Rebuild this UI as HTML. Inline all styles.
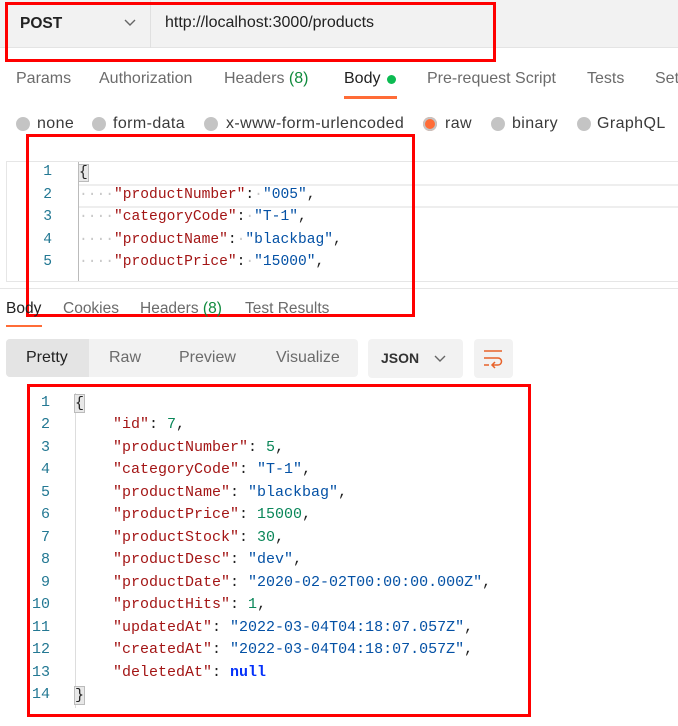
<!DOCTYPE html>
<html><head><meta charset="utf-8"><style>
*{margin:0;padding:0;box-sizing:border-box}
body{width:678px;height:726px;background:#fff;font-family:"Liberation Sans",sans-serif;position:relative;overflow:hidden;color:#212121}
.a{position:absolute;white-space:nowrap}
.mono{font-family:"Liberation Mono",monospace;font-size:14.6px}
.mono2{font-family:"Liberation Mono",monospace;font-size:15px}
.k{color:#a31515}.s{color:#0451a5}.n{color:#098658}.nl{color:#0431fa;font-weight:bold}
.ln{color:#237893;text-align:right;width:30px}
.red{position:absolute;border:3px solid #f00}
.tab{font-size:16px;color:#6b6b6b}
.rad{position:absolute;width:14px;height:14px;border-radius:50%;background:#c4c4c4}
.rl{font-size:16px;color:#3a3a3a;letter-spacing:0.4px}
.dot{color:#c8c8c8}
</style></head><body>
<div class="a" style="left:0;top:0;width:678px;height:48px;background:#f2f2f2;border-bottom:1px solid #e4e4e4"></div>
<div class="a" style="left:150px;top:0;width:1px;height:48px;background:#e0e0e0"></div>
<div class="a" style="left:20px;top:15px;font-size:15.5px;font-weight:bold;color:#222">POST</div>
<svg class="a" style="left:124px;top:18px" width="12" height="10"><path d="M1 2l5 5 5-5" stroke="#666" stroke-width="1.4" fill="none"/></svg>
<div class="a" style="left:165px;top:14px;font-size:16px;color:#222">http://localhost:3000/products</div>
<div class="red" style="left:5px;top:2px;width:491px;height:60px"></div>

<div class="a tab" style="left:16px;top:70px">Params</div>
<div class="a tab" style="left:99px;top:70px">Authorization</div>
<div class="a tab" style="left:224px;top:70px">Headers <span style="color:#0f8a3c">(8)</span></div>
<div class="a tab" style="left:344px;top:70px;color:#212121">Body</div>
<div class="a" style="left:387px;top:75px;width:9px;height:9px;border-radius:50%;background:#0cbb52"></div>
<div class="a" style="left:344px;top:96px;width:53px;height:3px;background:#ff6c37"></div>
<div class="a tab" style="left:427px;top:70px">Pre-request Script</div>
<div class="a tab" style="left:587px;top:70px">Tests</div>
<div class="a tab" style="left:655px;top:70px">Set</div>

<div class="rad" style="left:16px;top:117px"></div><div class="a rl" style="left:37px;top:115px">none</div>
<div class="rad" style="left:92px;top:117px"></div><div class="a rl" style="left:113px;top:115px">form-data</div>
<div class="rad" style="left:204px;top:117px"></div><div class="a rl" style="left:226px;top:115px">x-www-form-urlencoded</div>
<div class="rad" style="left:423px;top:117px;background:#ff6c37;box-shadow:0 0 0 2px #c4c4c4 inset"></div><div class="a rl" style="left:445px;top:115px">raw</div>
<div class="rad" style="left:491px;top:117px"></div><div class="a rl" style="left:512px;top:115px">binary</div>
<div class="rad" style="left:577px;top:117px"></div><div class="a rl" style="left:597px;top:115px">GraphQL</div>

<div class="a" style="left:6px;top:161px;width:680px;height:121px;border:1px solid #e6e6e6;border-right:none"></div>
<div class="a" style="left:78px;top:162px;width:1px;height:119px;background:#bbb"></div>
<div class="a" style="left:79px;top:184px;width:600px;height:2px;background:#eee"></div>
<div class="a" style="left:79px;top:206px;width:600px;height:2px;background:#eee"></div>
<div class="a" style="left:0;top:288px;width:678px;height:1px;background:#e6e6e6"></div>
<div class="mono">
<div class="a ln" style="left:22px;top:164px">1</div>
<div class="a ln" style="left:22px;top:187px">2</div>
<div class="a ln" style="left:22px;top:209px">3</div>
<div class="a ln" style="left:22px;top:232px">4</div>
<div class="a ln" style="left:22px;top:254px">5</div>
<div class="a" style="left:78px;top:164px;background:#e8e8e8;border:1px solid #bbb">{</div>
<div class="a" style="left:79px;top:187px"><span class="dot">····</span><span class="k">"productNumber"</span>:<span class="dot">·</span><span class="s">"005"</span>,</div>
<div class="a" style="left:79px;top:209px"><span class="dot">····</span><span class="k">"categoryCode"</span>:<span class="dot">·</span><span class="s">"T-1"</span>,</div>
<div class="a" style="left:79px;top:232px"><span class="dot">····</span><span class="k">"productName"</span>:<span class="dot">·</span><span class="s">"blackbag"</span>,</div>
<div class="a" style="left:79px;top:254px"><span class="dot">····</span><span class="k">"productPrice"</span>:<span class="dot">·</span><span class="s">"15000"</span>,</div>
</div>
<div class="red" style="left:26px;top:134px;width:389px;height:183px"></div>

<div class="a tab" style="left:6px;top:300px;color:#212121;font-size:15.5px">Body</div>
<div class="a tab" style="left:63px;top:300px;font-size:15.5px">Cookies</div>
<div class="a tab" style="left:140px;top:300px;font-size:15.5px">Headers <span style="color:#0f8a3c">(8)</span></div>
<div class="a tab" style="left:245px;top:300px;font-size:15.5px">Test Results</div>
<div class="a" style="left:6px;top:325px;width:36px;height:2px;background:#ff6c37"></div>

<div class="a" style="left:6px;top:339px;width:352px;height:38px;background:#f2f2f2;border-radius:4px"></div>
<div class="a" style="left:6px;top:339px;width:83px;height:38px;background:#e4e4e4;border-radius:4px 0 0 4px"></div>
<div class="a tab" style="left:26px;top:349px;color:#222">Pretty</div>
<div class="a tab" style="left:109px;top:349px">Raw</div>
<div class="a tab" style="left:179px;top:349px">Preview</div>
<div class="a tab" style="left:276px;top:349px">Visualize</div>
<div class="a" style="left:368px;top:339px;width:95px;height:39px;background:#f2f2f2;border-radius:4px"></div>
<div class="a" style="left:381px;top:350px;font-size:14px;font-weight:bold;color:#333">JSON</div>
<svg class="a" style="left:434px;top:354px" width="12" height="10"><path d="M1 2l5 5 5-5" stroke="#666" stroke-width="1.4" fill="none"/></svg>
<div class="a" style="left:474px;top:339px;width:39px;height:39px;background:#f2f2f2;border-radius:4px"></div>
<svg class="a" style="left:483px;top:349px" width="22" height="20"><path d="M1 2h18M1 9h14a3.5 3.5 0 0 1 0 7h-5M12 13l-3 3 3 3M1 16h5" stroke="#e8632b" stroke-width="1.5" fill="none"/></svg>

<div class="a" style="left:75px;top:393px;width:1px;height:315px;background:#ddd"></div>
<div class="mono2">
<div class="a ln" style="left:20px;top:394px">1</div>
<div class="a ln" style="left:20px;top:416px">2</div>
<div class="a ln" style="left:20px;top:439px">3</div>
<div class="a ln" style="left:20px;top:461px">4</div>
<div class="a ln" style="left:20px;top:484px">5</div>
<div class="a ln" style="left:20px;top:506px">6</div>
<div class="a ln" style="left:20px;top:529px">7</div>
<div class="a ln" style="left:20px;top:551px">8</div>
<div class="a ln" style="left:20px;top:574px">9</div>
<div class="a ln" style="left:20px;top:596px">10</div>
<div class="a ln" style="left:20px;top:619px">11</div>
<div class="a ln" style="left:20px;top:641px">12</div>
<div class="a ln" style="left:20px;top:664px">13</div>
<div class="a ln" style="left:20px;top:686px">14</div>
<div class="a" style="left:74px;top:394px;background:#e8e8e8;border:1px solid #bbb">{</div>
<div class="a" style="left:113px;top:416px"><span class="k">"id"</span>: <span class="n">7</span>,</div>
<div class="a" style="left:113px;top:439px"><span class="k">"productNumber"</span>: <span class="n">5</span>,</div>
<div class="a" style="left:113px;top:461px"><span class="k">"categoryCode"</span>: <span class="s">"T-1"</span>,</div>
<div class="a" style="left:113px;top:484px"><span class="k">"productName"</span>: <span class="s">"blackbag"</span>,</div>
<div class="a" style="left:113px;top:506px"><span class="k">"productPrice"</span>: <span class="n">15000</span>,</div>
<div class="a" style="left:113px;top:529px"><span class="k">"productStock"</span>: <span class="n">30</span>,</div>
<div class="a" style="left:113px;top:551px"><span class="k">"productDesc"</span>: <span class="s">"dev"</span>,</div>
<div class="a" style="left:113px;top:574px"><span class="k">"productDate"</span>: <span class="s">"2020-02-02T00:00:00.000Z"</span>,</div>
<div class="a" style="left:113px;top:596px"><span class="k">"productHits"</span>: <span class="n">1</span>,</div>
<div class="a" style="left:113px;top:619px"><span class="k">"updatedAt"</span>: <span class="s">"2022-03-04T04:18:07.057Z"</span>,</div>
<div class="a" style="left:113px;top:641px"><span class="k">"createdAt"</span>: <span class="s">"2022-03-04T04:18:07.057Z"</span>,</div>
<div class="a" style="left:113px;top:664px"><span class="k">"deletedAt"</span>: <span class="nl">null</span></div>
<div class="a" style="left:74px;top:686px;background:#e8e8e8;border:1px solid #bbb">}</div>
</div>
<div class="red" style="left:27px;top:384px;width:504px;height:333px"></div>
</body></html>
